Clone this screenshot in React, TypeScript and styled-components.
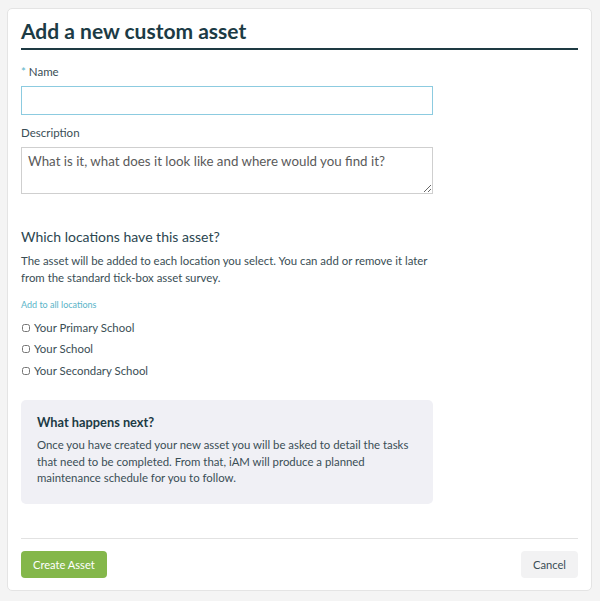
import styled, { createGlobalStyle } from 'styled-components';

const GlobalStyle = createGlobalStyle`
  html, body {
    margin: 0;
    padding: 0;
    background: #f4f4f4;
  }
  body {
    font-family: Lato, 'Noto Sans', sans-serif;
    color: #3a4e55;
  }
  * {
    box-sizing: border-box;
  }
`;

const locations = ['Your Primary School', 'Your School', 'Your Secondary School'];

function App() {
  return (
    <>
      <GlobalStyle />
      <Page>
        <Card>
          <Title>Add a new custom asset</Title>

          <Field>
            <Label>
              <Required>*</Required> Name
            </Label>
            <TextInput type="text" />
          </Field>

          <Field>
            <Label>Description</Label>
            <TextArea placeholder="What is it, what does it look like and where would you find it?" />
          </Field>

          <Section>
            <SectionTitle>Which locations have this asset?</SectionTitle>
            <Paragraph>
              The asset will be added to each location you select. You can add or remove it later
              from the standard tick-box asset survey.
            </Paragraph>
            <AddAllLink href="#">Add to all locations</AddAllLink>
            <CheckList>
              {locations.map((name) => (
                <CheckRow key={name}>
                  <Checkbox type="checkbox" />
                  {name}
                </CheckRow>
              ))}
            </CheckList>
          </Section>

          <InfoBox>
            <InfoTitle>What happens next?</InfoTitle>
            <InfoText>
              Once you have created your new asset you will be asked to detail the tasks that need
              to be completed. From that, iAM will produce a planned maintenance schedule for you
              to follow.
            </InfoText>
          </InfoBox>

          <Footer>
            <PrimaryButton>Create Asset</PrimaryButton>
            <SecondaryButton>Cancel</SecondaryButton>
          </Footer>
        </Card>
      </Page>
    </>
  );
}

const Page = styled.div`
  padding: 8px 8px 8px 7px;
`;

const Card = styled.div`
  background: #fff;
  border: 1px solid #e4e4e4;
  border-radius: 5px;
  padding: 9px 13px 12px 13px;
`;

const Title = styled.h1`
  margin: 0 0 15px;
  padding-bottom: 4px;
  font-size: 21px;
  font-weight: 700;
  line-height: 26px;
  color: #1c3b45;
  border-bottom: 2px solid #1e3a43;
`;

const Field = styled.div`
  margin-bottom: 11px;
`;

const Label = styled.label`
  display: block;
  font-size: 11.5px;
  line-height: 14px;
  color: #3a4e55;
  margin-bottom: 7px;
`;

const Required = styled.span`
  color: #5ab4c8;
`;

const TextInput = styled.input`
  display: block;
  width: 412px;
  height: 29px;
  border: 1px solid #8ccbe0;
  outline: none;
  font: inherit;
`;

const TextArea = styled.textarea`
  display: block;
  width: 412px;
  height: 47px;
  border: 1px solid #cfcfcf;
  padding: 5px 6px;
  font-family: inherit;
  font-size: 13.3px;
  color: #555;
  resize: vertical;

  &::placeholder {
    color: #5a5a5a;
  }
`;

const Section = styled.div`
  margin-top: 34px;
`;

const SectionTitle = styled.h2`
  margin: 0 0 7px;
  font-size: 14px;
  line-height: 18px;
  font-weight: 400;
  color: #2b4650;
`;

const Paragraph = styled.p`
  margin: 0 0 13px;
  width: 430px;
  font-size: 11.4px;
  line-height: 16.7px;
  color: #3a4e55;
`;

const AddAllLink = styled.a`
  display: block;
  font-size: 9px;
  line-height: 12px;
  color: #5ab4c8;
  text-decoration: none;
  margin-bottom: 8.5px;
`;

const CheckList = styled.div`
  display: flex;
  flex-direction: column;
  gap: 5.5px;
`;

const CheckRow = styled.label`
  display: flex;
  align-items: center;
  gap: 4px;
  font-size: 11.4px;
  line-height: 16px;
  color: #3a4e55;
`;

const Checkbox = styled.input`
  margin: 0 0 0 1px;
  width: 8px;
  height: 8px;
`;

const InfoBox = styled.div`
  margin-top: 21px;
  width: 412px;
  background: #f0f0f5;
  border-radius: 5px;
  padding: 14px 16px 17px;
`;

const InfoTitle = styled.h3`
  margin: 0 0 7px;
  font-size: 12.8px;
  line-height: 16px;
  font-weight: 700;
  color: #1c3b45;
`;

const InfoText = styled.p`
  margin: 0;
  font-size: 11.4px;
  line-height: 16.7px;
  color: #3a4e55;
`;

const Footer = styled.div`
  margin-top: 34px;
  padding-top: 12px;
  border-top: 1px solid #e2e2e2;
  display: flex;
  justify-content: space-between;
  align-items: center;
`;

const PrimaryButton = styled.button`
  height: 27px;
  padding: 0 12px;
  border: none;
  border-radius: 4px;
  background: #84b74a;
  color: #fff;
  font-family: inherit;
  font-size: 11.1px;
`;

const SecondaryButton = styled.button`
  height: 27px;
  padding: 0 12px;
  border: none;
  border-radius: 4px;
  background: #f2f2f3;
  color: #3a4e55;
  font-family: inherit;
  font-size: 11.2px;
`;

export default App;
